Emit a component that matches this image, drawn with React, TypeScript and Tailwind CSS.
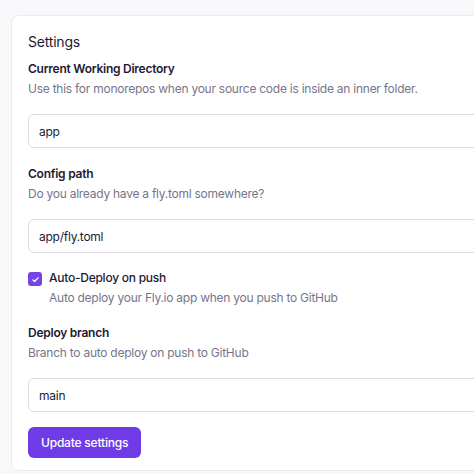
import React, { useState } from "react";

function Field({ label, hint, value, className = "" }: { label: string; hint: string; value: string; className?: string }) {
  return (
    <div className={className}>
      <div className="text-[12px] leading-[18px] font-semibold tracking-[-0.25px] text-[#1d1a33]">{label}</div>
      <div className="mt-[2px] text-[12px] leading-[18px] tracking-[-0.25px] text-[#77758a]">{hint}</div>
      <input
        defaultValue={value}
        className="mt-[16px] block w-full h-[34px] rounded-md border border-[#dcdbe6] bg-white px-[10px] text-[12px] tracking-[-0.25px] text-[#1d1a33] outline-none"
      />
    </div>
  );
}

export default function App() {
  const [checked, setChecked] = useState(true);

  return (
    <div className="h-screen overflow-hidden bg-[#f8f8fb] pl-[11px] pt-[15px] font-['Inter',sans-serif]">
      <div className="w-[520px] rounded-lg border border-[#ebeaf1] bg-white px-4 pt-[17px] pb-3">
        <h2 className="text-[14px] leading-[18px] font-normal tracking-[-0.2px] text-[#1d1a33]">Settings</h2>

        <Field
          className="mt-[9px]"
          label="Current Working Directory"
          hint="Use this for monorepos when your source code is inside an inner folder."
          value="app"
        />

        <Field
          className="mt-[17px]"
          label="Config path"
          hint="Do you already have a fly.toml somewhere?"
          value="app/fly.toml"
        />

        {/* Auto deploy */}
        <div className="mt-[16px] flex gap-[7px]">
          <button
            onClick={() => setChecked(!checked)}
            className={`mt-[3px] flex h-[14px] w-[14px] items-center justify-center rounded-[3px] ${checked ? "bg-[#7543e6]" : "border border-[#dcdbe6] bg-white"}`}
          >
            {checked && (
              <svg width="9" height="9" viewBox="0 0 12 12" fill="none">
                <path d="M2.5 6.5l2.3 2.2L9.5 3.8" stroke="white" strokeWidth="1.8" strokeLinecap="round" strokeLinejoin="round" />
              </svg>
            )}
          </button>
          <div>
            <div className="text-[12px] leading-[18px] font-medium tracking-[-0.25px] text-[#1d1a33]">Auto-Deploy on push</div>
            <div className="mt-[2px] text-[12px] leading-[18px] tracking-[-0.25px] text-[#77758a]">Auto deploy your Fly.io app when you push to GitHub</div>
          </div>
        </div>

        <Field
          className="mt-[17px]"
          label="Deploy branch"
          hint="Branch to auto deploy on push to GitHub"
          value="main"
        />

        <button className="mt-[15px] h-[31px] rounded-md bg-[#6f3be6] px-[13px] text-[12px] font-medium tracking-[-0.2px] text-white">
          Update settings
        </button>
      </div>
    </div>
  );
}
